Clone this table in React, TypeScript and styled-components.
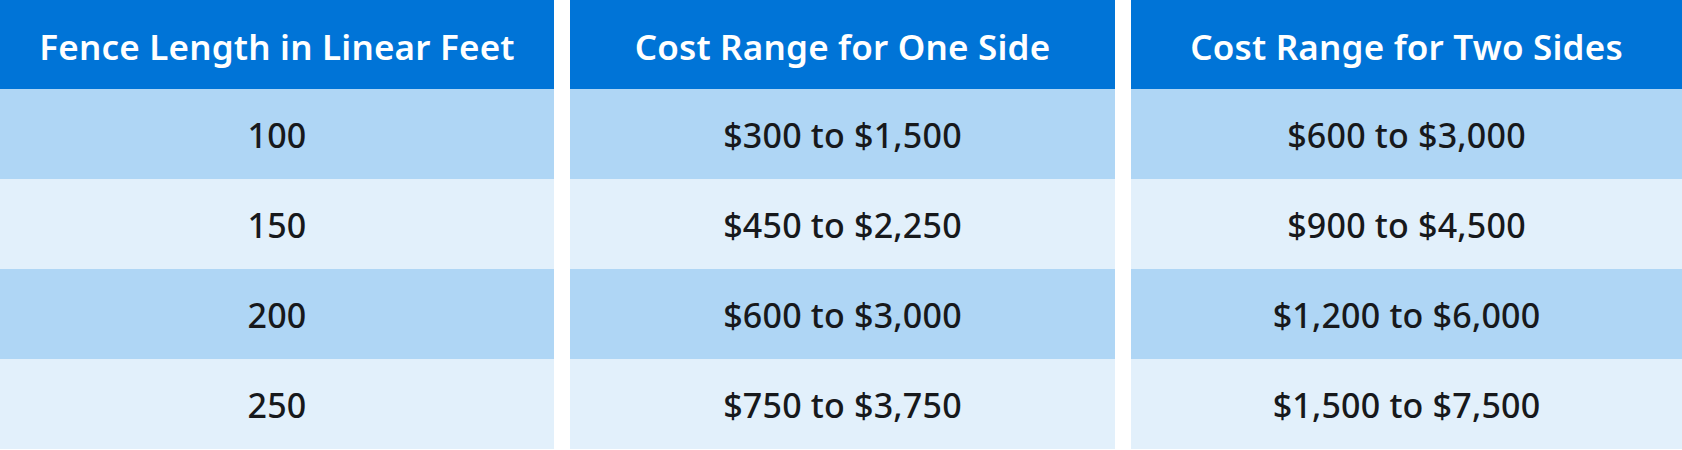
import React from 'react';
import { styled, createGlobalStyle } from 'styled-components';

const palette = {
  head: '#0074d7',
  rowDark: '#afd6f5',
  rowLight: '#e2f0fb',
  text: '#17191c',
  white: '#ffffff',
};

const columns = [
  {
    title: 'Fence Length in Linear Feet',
    cells: ['100', '150', '200', '250'],
  },
  {
    title: 'Cost Range for One Side',
    cells: ['$300 to $1,500', '$450 to $2,250', '$600 to $3,000', '$750 to $3,750'],
  },
  {
    title: 'Cost Range for Two Sides',
    cells: ['$600 to $3,000', '$900 to $4,500', '$1,200 to $6,000', '$1,500 to $7,500'],
  },
];

const GlobalStyle = createGlobalStyle`
  body {
    margin: 0;
    background: ${palette.white};
    font-family: 'Noto Sans', 'Open Sans', sans-serif;
  }
`;

const App: React.FC = () => {
  return (
    <>
      <GlobalStyle />
      <StTable>
        {columns.map((col) => (
          <StColumn key={col.title}>
            <StHeader>{col.title}</StHeader>
            {col.cells.map((cell, i) => (
              <StCell key={cell} $dark={i % 2 === 0}>
                {cell}
              </StCell>
            ))}
          </StColumn>
        ))}
      </StTable>
    </>
  );
};

export default App;

const StTable = styled.div`
  display: grid;
  grid-template-columns: 554px 545px 551px;
  column-gap: 16px;
  width: 1682px;
  height: 450px;
  overflow: hidden;
`;

const StColumn = styled.div`
  display: grid;
  grid-template-rows: 89px repeat(4, 90px);
`;

const StHeader = styled.div`
  display: flex;
  align-items: center;
  justify-content: center;
  background-color: ${palette.head};
  color: ${palette.white};
  font-size: 35px;
  font-weight: 600;
  letter-spacing: 0.2px;
  padding-top: 3px;
`;

const StCell = styled.div<{ $dark: boolean }>`
  display: flex;
  align-items: center;
  justify-content: center;
  background-color: ${(p) => (p.$dark ? palette.rowDark : palette.rowLight)};
  color: ${palette.text};
  font-size: 34px;
  font-weight: 500;
  letter-spacing: 0.2px;
  padding-top: 2px;
`;
